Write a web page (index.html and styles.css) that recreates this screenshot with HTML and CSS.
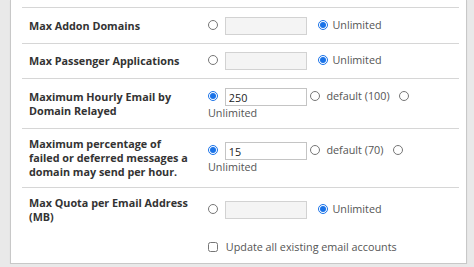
FILE: index.html
```html
<!DOCTYPE html>
<html lang="en">
<head>
	<meta charset="utf-8">
	<title>Package limits</title>
	<link rel="stylesheet" href="styles.css">
</head>
<body>
	<div class="panel">
		<table class="limits">
			<tr class="plus">
				<td class="lbl">Max Addon Domains</td>
				<td class="val"><input type="radio" name="addon" class="r-first"> <input type="text" class="num" disabled> <input type="radio" name="addon" class="r-unl" checked> Unlimited</td>
			</tr>
			<tr>
				<td class="lbl">Max Passenger Applications</td>
				<td class="val"><input type="radio" name="pass" class="r-first"> <input type="text" class="num" disabled> <input type="radio" name="pass" class="r-unl" checked> Unlimited</td>
			</tr>
			<tr class="plus">
				<td class="lbl">Maximum Hourly Email by Domain Relayed</td>
				<td class="val"><input type="radio" name="hourly" class="r-first" checked> <input type="text" class="num" value="250"> <input type="radio" name="hourly" class="r-def"> default (100) <input type="radio" name="hourly" class="r-last"> Unlimited</td>
			</tr>
			<tr>
				<td class="lbl">Maximum percentage of failed or deferred messages a domain may send per hour.</td>
				<td class="val"><input type="radio" name="fail" class="r-first" checked> <input type="text" class="num" value="15"> <input type="radio" name="fail" class="r-def"> default (70) <input type="radio" name="fail" class="r-last"> Unlimited</td>
			</tr>
			<tr>
				<td class="lbl">Max Quota per Email Address (MB)</td>
				<td class="val"><input type="radio" name="quota" class="r-first"> <input type="text" class="num" disabled> <input type="radio" name="quota" class="r-unl" checked> Unlimited</td>
			</tr>
			<tr class="noline">
				<td class="lbl"></td>
				<td class="val"><input type="checkbox" class="chk"> Update all existing email accounts</td>
			</tr>
		</table>
	</div>
</body>
</html>
```

FILE: styles.css
```css
body{margin: 0;background: #e9e9e9;font-family: "Open Sans", "Liberation Sans", sans-serif;font-size: 10.8px;line-height: 14px;color: #333;}
.panel{margin-left: 10px;width: 457px;box-sizing: border-box;height: 264px;background: #fff;border: 1px solid #c8c8c8;border-top: 0;padding: 7px 7px 0 11px;box-shadow: 0 1px 1px rgba(0,0,0,.08);}
.limits{width: 437px;border-collapse: collapse;}
.limits td{border-top: 1px solid #d6d6d6;padding: 8px 7px;vertical-align: middle;}
.limits tr.plus td{padding-top: 9px;}
.limits tr.noline td{border-top: 0;}
.lbl{width: 165px;font-weight: bold;color: #333;}
.val{color: #555;}
.val input[type=radio], .val input[type=checkbox]{width: 10px;height: 10px;margin: 0;vertical-align: -1px;accent-color: #1a73e8;}
.num{width: 82px;height: 18px;box-sizing: border-box;margin: 0;padding: 0 3px;border: 1px solid #c4c4c4;font: 10.8px "Open Sans", "Liberation Sans", sans-serif;color: #222;vertical-align: middle;background: #fff;}
.num:disabled{background: #f4f4f4;border-color: #d2d2d2;}
.r-first{margin-right: 4px !important;}
.r-unl{margin-left: 8px !important;margin-right: 2px !important;}
.r-def{margin-right: 4px !important;}
.r-last{margin-left: 7px !important;}
.chk{margin-right: 5px !important;}
```
